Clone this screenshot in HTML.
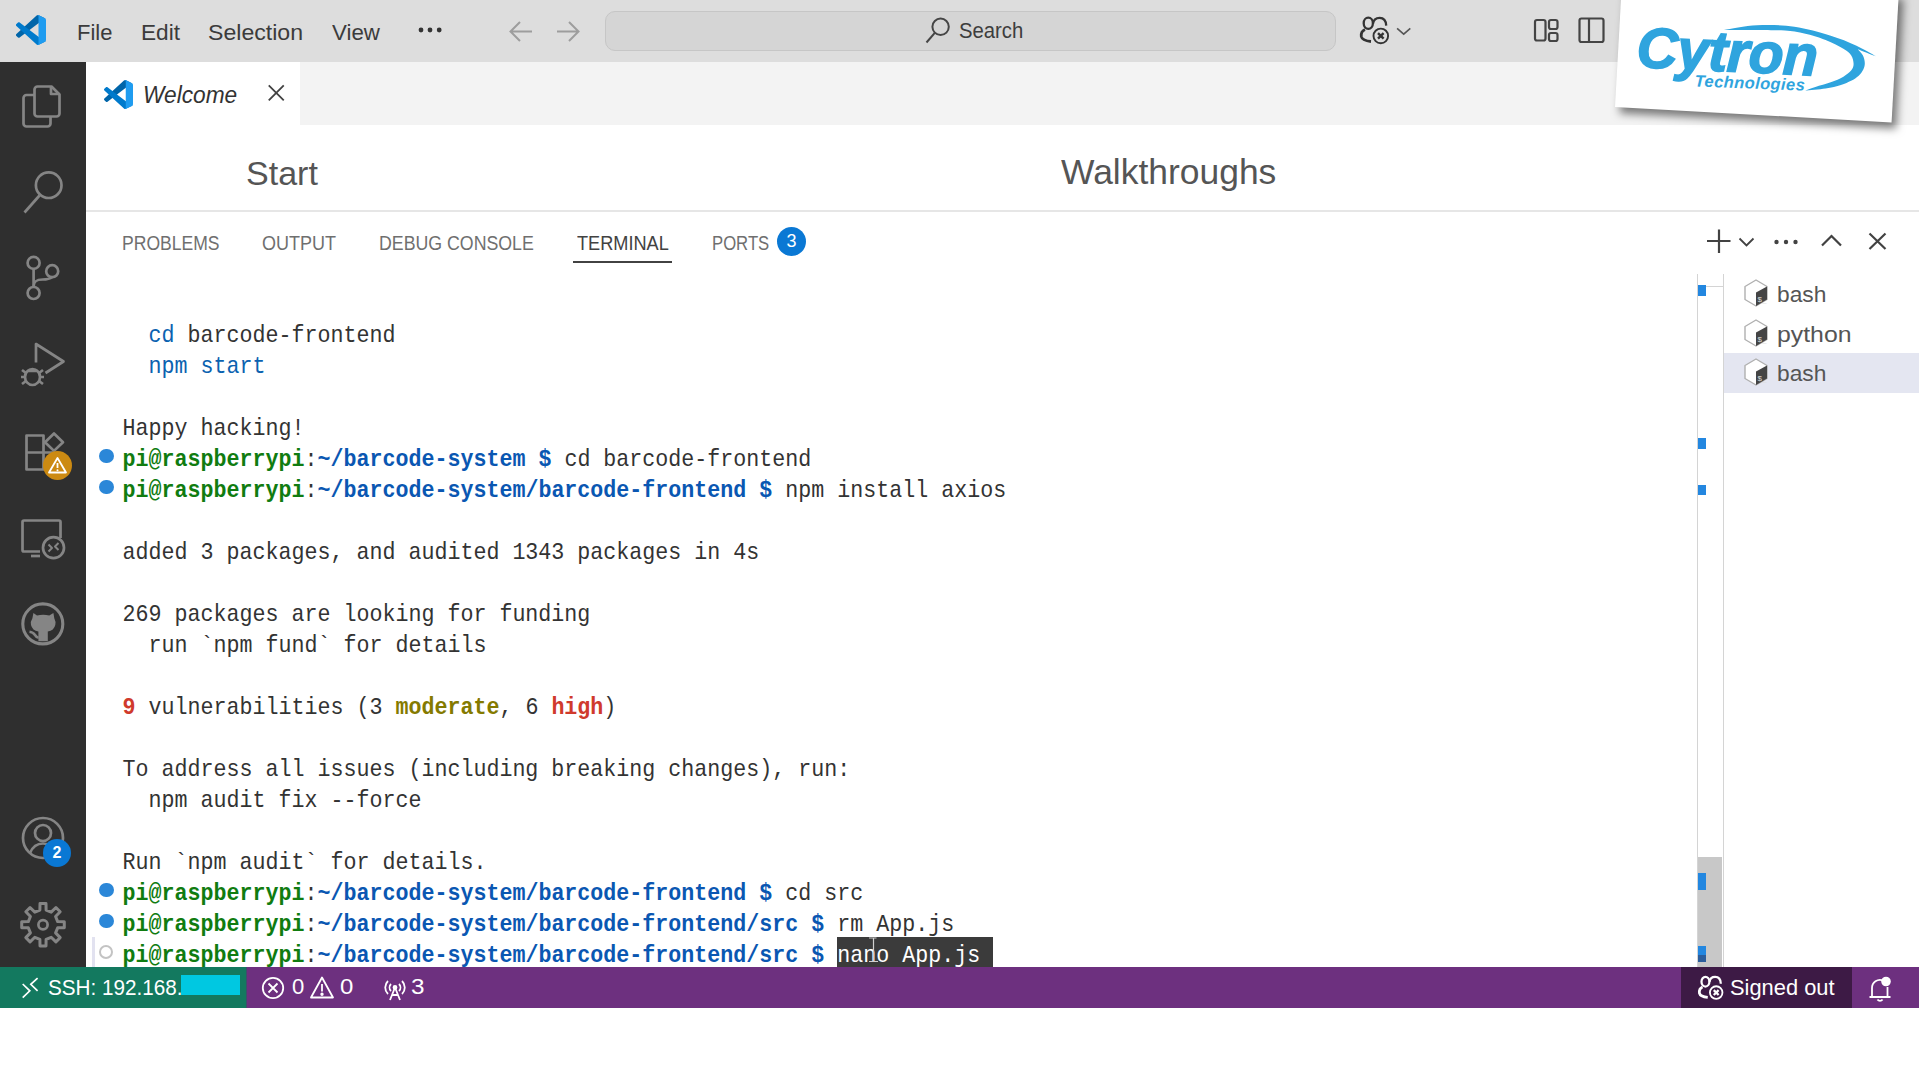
<!DOCTYPE html>
<html><head><meta charset="utf-8">
<style>
*{margin:0;padding:0;box-sizing:border-box}
html,body{width:1919px;height:1079px;overflow:hidden;background:#fff;font-family:"Liberation Sans",sans-serif;position:relative}
.abs{position:absolute}
.tx{position:absolute;height:0;white-space:nowrap;line-height:0}
.tx span{position:absolute;left:0;bottom:0;line-height:1;display:block}
.ln{position:absolute;left:122.5px;transform:scaleY(1.08);transform-origin:0 21.27px;font-family:"Liberation Mono",monospace;font-size:21.667px;line-height:31px;height:31px;white-space:pre;color:#333}
.g{color:#107c10;font-weight:bold}
.b{color:#0a57b2;font-weight:bold}
.c{color:#0b62b0}
.r{color:#d03a2c;font-weight:bold}
.y{color:#847a00;font-weight:bold}
.sel{color:#fff}
</style></head>
<body>
<div class="abs" style="left:0;top:0;width:1919px;height:62px;background:#dddddd"></div>
<svg viewBox="0 0 100 100" width="30" height="30" style="position:absolute;left:16px;top:15px">
<path d="M96.46 10.8L75.86.87C73.47-.28 70.62.2 68.75 2.08L1.3 63.58c-1.81 1.65-1.81 4.51.01 6.15l5.51 5.01c1.49 1.35 3.72 1.45 5.32.24l81.23-61.62c2.72-2.07 6.64-.13 6.64 3.290v-.24c0-2.4-1.38-4.59-3.54-5.63z" fill="#0065A9"/>
<path d="M96.46 89.2L75.86 99.13c-2.39 1.15-5.24.67-7.11-1.21L1.3 36.42c-1.81-1.65-1.81-4.51.01-6.15l5.51-5.01c1.49-1.35 3.72-1.450 5.32-.24l81.23 61.62c2.72 2.07 6.64.13 6.64-3.29v.24c0 2.4-1.38 4.59-3.54 5.63z" fill="#007ACC"/>
<path d="M75.86 99.13c-2.39 1.15-5.24.66-7.11-1.21 2.31 2.31 6.25.67 6.25-2.59V4.67c0-3.26-3.94-4.9-6.25-2.59 1.87-1.87 4.72-2.36 7.11-1.21l20.6 9.91c2.16 1.04 3.54 3.23 3.54 5.63v67.2c0 2.4-1.38 4.59-3.54 5.63z" fill="#1F9CF0"/>
</svg>
<div class="tx" style="left:76.94px;top:44.27px;font-size:21.33px;color:#3b3b3b;font-weight:normal;font-style:normal;transform:scaleX(1.0319);transform-origin:0 0;"><span>File</span></div>
<div class="tx" style="left:140.89px;top:44.27px;font-size:21.33px;color:#3b3b3b;font-weight:normal;font-style:normal;transform:scaleX(1.0604);transform-origin:0 0;"><span>Edit</span></div>
<div class="tx" style="left:208.15px;top:44.27px;font-size:21.33px;color:#3b3b3b;font-weight:normal;font-style:normal;transform:scaleX(1.0828);transform-origin:0 0;"><span>Selection</span></div>
<div class="tx" style="left:332.08px;top:44.27px;font-size:21.33px;color:#3b3b3b;font-weight:normal;font-style:normal;transform:scaleX(1.0448);transform-origin:0 0;"><span>View</span></div>
<svg class="abs" style="left:410px;top:20px" width="40" height="20"><circle cx="11" cy="10" r="2.4" fill="#333"/><circle cx="20" cy="10" r="2.4" fill="#333"/><circle cx="29.2" cy="10" r="2.4" fill="#333"/></svg>
<svg class="abs" style="left:500px;top:15px" width="90" height="32" fill="none" stroke="#9d9d9d" stroke-width="2"><path d="M11 16.5h21M20 7l-9.5 9.5L20 26"/><path d="M57 16.5h21M69 7l9.5 9.5L69 26"/></svg>
<div class="abs" style="left:605px;top:11px;width:731px;height:40px;border:1px solid #c6c6c6;border-radius:10px;background:#d5d5d5"></div>
<svg class="abs" style="left:920px;top:12px" width="30" height="36" fill="none" stroke="#454545" stroke-width="2"><circle cx="20.6" cy="14.8" r="8.2"/><path d="M14.8 20.8L6.5 30.5"/></svg>
<div class="tx" style="left:958.79px;top:42.64px;font-size:22.43px;color:#3d3d3d;font-weight:normal;font-style:normal;transform:scaleX(0.9049);transform-origin:0 0;"><span>Search</span></div>
<svg class="abs" style="left:1355px;top:12px" width="60" height="36" fill="none" stroke="#333" stroke-width="2.3">
<ellipse cx="13.3" cy="11.3" rx="4.6" ry="5.6"/><path d="M18 11.5C18.5 8 21 5.8 24.6 5.8S31 8 31.2 13.6"/><path d="M10 17.5C6.5 19 6 22 6.3 24.5C7 27.5 11 29 16 29.5" stroke-width="2.8"/>
<circle cx="25.8" cy="23.9" r="7.3" stroke-width="1.9"/><path d="M23 21.1l5.6 5.6M28.6 21.1l-5.6 5.6" stroke-width="2.4"/>
<path d="M42.1 16.3l6.6 5.8 6.6-5.8" stroke-width="1.6" stroke="#555"/></svg>
<svg class="abs" style="left:1525px;top:12px" width="90" height="36" fill="none" stroke="#444" stroke-width="2.2">
<rect x="10" y="8" width="10.5" height="20.5" rx="2"/><rect x="24" y="8" width="8.5" height="9" rx="2"/><rect x="24" y="21" width="8.5" height="8" rx="2"/>
<rect x="54.5" y="6.5" width="24" height="23.5" rx="2"/><path d="M64 6.5v23.5"/></svg>
<div class="abs" style="left:1615px;top:-23px;width:277px;height:130px;transform-origin:0 130px;transform:rotate(3.2deg);background:#fff;z-index:10;box-shadow:5px 6px 9px rgba(0,0,0,0.5)"></div>
<svg class="abs" style="left:0;top:0;z-index:11" width="1919" height="140">
<g fill="#2fa4de">
<path d="M1724.00 30.00 L1724.00 30.00 C1729.50 29.22 1745.27 25.85 1757.00 25.30 C1768.73 24.75 1782.23 25.00 1794.40 26.70 C1806.57 28.40 1819.73 32.37 1830.00 35.50 C1840.27 38.63 1848.33 42.03 1856.00 45.50 C1863.67 48.97 1872.67 54.50 1876.00 56.30 L1876.00 56.30 C1872.95 55.12 1860.75 50.38 1857.70 49.20 L1857.70 49.20 C1858.55 50.22 1861.62 53.02 1862.80 55.30 C1863.98 57.58 1864.72 60.52 1864.80 62.90 C1864.88 65.28 1864.32 67.47 1863.30 69.60 C1862.28 71.73 1860.73 73.83 1858.70 75.70 C1856.67 77.57 1854.07 79.27 1851.10 80.80 C1848.13 82.33 1845.15 83.63 1840.90 84.90 C1836.65 86.17 1831.55 87.47 1825.60 88.40 C1819.65 89.33 1808.60 90.15 1805.20 90.50 L1805.20 90.50 C1806.90 89.90 1811.15 88.27 1815.40 86.90 C1819.65 85.53 1826.03 84.00 1830.70 82.30 C1835.37 80.60 1840.00 78.65 1843.40 76.70 C1846.80 74.75 1849.40 72.72 1851.10 70.60 C1852.80 68.48 1853.60 66.55 1853.60 64.00 C1853.60 61.45 1852.80 57.85 1851.10 55.30 C1849.40 52.75 1847.65 51.25 1843.40 48.70 C1839.15 46.15 1832.83 42.68 1825.60 40.00 C1818.37 37.32 1808.27 34.23 1800.00 32.60 C1791.73 30.97 1788.67 30.63 1776.00 30.20 C1763.33 29.77 1732.67 30.03 1724.00 30.00Z"/>
<text x="1636" y="67" transform="rotate(2.7 1636 67)" font-family="Liberation Sans" font-weight="bold" font-style="italic" font-size="57" stroke="#2fa4de" stroke-width="1.6" letter-spacing="-0.5">Cytron</text>
<text x="1694.5" y="86.4" transform="rotate(2.2 1694.5 86.4)" font-family="Liberation Sans" font-weight="bold" font-style="italic" font-size="16.5" letter-spacing="0.4">Technologies</text>
</g></svg>
<div class="abs" style="left:0;top:62px;width:86px;height:905px;background:#2f2f2f"></div>
<svg class="abs" style="left:0;top:62px" width="86" height="905" fill="none" stroke="#858585" stroke-width="2.7" stroke-linejoin="round">
<!-- explorer -->
<path d="M23.5 36v25.5a3 3 0 0 0 3 3h21a3 3 0 0 0 3-3v-7.5"/>
<path d="M23.5 36a3 3 0 0 1 3-3h8"/>
<path d="M37.5 24.5h14l8 8v19a3 3 0 0 1-3 3h-19a3 3 0 0 1-3-3v-24a3 3 0 0 1 3-3z"/>
<path d="M51 24.5v7.5h8.5"/>
<!-- search -->
<circle cx="48.7" cy="123.2" r="12.8"/><path d="M39.5 133.5L24.5 150.5"/>
<!-- source control -->
<circle cx="33.6" cy="200.9" r="6"/><circle cx="52.2" cy="209.2" r="6"/><circle cx="33.6" cy="231" r="6"/>
<path d="M33.6 207v18"/><path d="M33.6 225c0-6 3-7.5 9-7.5s9-2 9.6-2.5"/>
<!-- run debug -->
<path d="M36 300.5V282L63.5 299.5 45.5 311"/>
<ellipse cx="32.5" cy="315" rx="7.5" ry="8"/><path d="M22 308l4 3M22 322l4-3M43 308l-4 3M43 322l-4-3M21 315h4M40 315h4M27 309h11"/>
<!-- extensions -->
<path d="M26.5 373.5h17v34h-17zM26.5 390.5h17M43.5 390.5h9v17h-9"/>
<path d="M54 371.5l9 8.7-9 8.7-9-8.7z"/>
<!-- remote -->
<path d="M40 489.5H24a1.5 1.5 0 0 1-1.5-1.5V460a1.5 1.5 0 0 1 1.5-1.5h35a1.5 1.5 0 0 1 1.5 1.5v16"/><path d="M31 494h9"/>
<circle cx="53.5" cy="485.7" r="10.5"/>
<path d="M48.5 482.5l3.5 3.5-3.5 3.5M58.5 481l-3.5 3.5 3.5 3.5" stroke-width="2"/>
<!-- github -->
<circle cx="42.8" cy="561.9" r="20" stroke-width="3.1"/>
<!-- accounts -->
<circle cx="43" cy="776" r="20"/><circle cx="43" cy="771" r="8"/><path d="M30 791c2.5-6 7-9.5 13-9.5s10.5 3.5 13 9.5"/>
<!-- gear -->
<circle cx="43" cy="862.7" r="4.6"/>
</svg>
<svg class="abs" style="left:0;top:590px" width="86" height="60"><path fill="#858585" d="M33.4 23.1L37 25.6Q43.1 24 49.3 25.6L53.4 23.1L54.3 28.3Q56 31.5 55.3 35Q54 40.5 47.8 41.6V51.3H38.4V41.6Q32.3 40.5 31 35Q30.3 31.5 32.4 28.3Z"/><path d="M29.5 41.7Q33 42 35 45Q36.5 47.5 38.6 47.8" fill="none" stroke="#858585" stroke-width="2.6"/></svg>
<svg class="abs" style="left:0;top:0" width="86" height="1000" fill="none" stroke="#858585" stroke-width="3" stroke-linejoin="round"><path d="M39.88 910.03 L40.01 903.41 L45.99 903.41 L46.12 910.03 L51.17 912.12 L55.94 907.53 L60.17 911.76 L55.58 916.53 L57.67 921.58 L64.29 921.71 L64.29 927.69 L57.67 927.82 L55.58 932.87 L60.17 937.64 L55.94 941.87 L51.17 937.28 L46.12 939.37 L45.99 945.99 L40.01 945.99 L39.88 939.37 L34.83 937.28 L30.06 941.87 L25.83 937.64 L30.42 932.87 L28.33 927.82 L21.71 927.69 L21.71 921.71 L28.33 921.58 L30.42 916.53 L25.83 911.76 L30.06 907.53 L34.83 912.12Z"/></svg>
<div class="abs" style="left:43px;top:451px;width:29px;height:29px;border-radius:50%;background:#cc8a12"></div>
<svg class="abs" style="left:43px;top:451px" width="29" height="29"><path d="M14.5 7L23 21.5H6z" fill="none" stroke="#fff" stroke-width="1.8" stroke-linejoin="round"/><path d="M14.5 12v5" stroke="#fff" stroke-width="1.8"/><circle cx="14.5" cy="19.3" r="1" fill="#fff"/></svg>
<div class="abs" style="left:43px;top:839px;width:28px;height:28px;border-radius:50%;background:#0a78d4;color:#fff;font-weight:bold;font-size:16px;line-height:28px;text-align:center">2</div>
<div class="abs" style="left:86px;top:62px;width:1833px;height:63px;background:#f3f3f3"></div>
<div class="abs" style="left:86px;top:62px;width:214px;height:63px;background:#fff"></div>
<svg viewBox="0 0 100 100" width="29" height="29" style="position:absolute;left:104px;top:80px">
<path d="M96.46 10.8L75.86.87C73.47-.28 70.62.2 68.75 2.08L1.3 63.58c-1.81 1.65-1.81 4.51.01 6.15l5.51 5.01c1.49 1.35 3.72 1.45 5.32.24l81.23-61.62c2.72-2.07 6.64-.13 6.64 3.290v-.24c0-2.4-1.38-4.59-3.54-5.63z" fill="#0065A9"/>
<path d="M96.46 89.2L75.86 99.13c-2.39 1.15-5.24.67-7.11-1.21L1.3 36.42c-1.81-1.65-1.81-4.51.01-6.15l5.51-5.01c1.49-1.35 3.72-1.450 5.32-.24l81.23 61.62c2.72 2.07 6.64.13 6.64-3.29v.24c0 2.4-1.38 4.59-3.54 5.63z" fill="#007ACC"/>
<path d="M75.86 99.13c-2.39 1.15-5.24.66-7.11-1.21 2.31 2.31 6.25.67 6.25-2.59V4.67c0-3.26-3.94-4.9-6.25-2.59 1.87-1.87 4.72-2.36 7.11-1.21l20.6 9.91c2.16 1.04 3.54 3.23 3.54 5.63v67.2c0 2.4-1.38 4.59-3.54 5.63z" fill="#1F9CF0"/>
</svg>
<div class="tx" style="left:142.86px;top:106.85px;font-size:23.14px;color:#333;font-weight:normal;font-style:italic;transform:scaleX(0.9814);transform-origin:0 0;"><span>Welcome</span></div>
<svg class="abs" style="left:262px;top:79px" width="28" height="28" stroke="#424242" stroke-width="2.2"><path d="M6.75 6.4l15 15M21.75 6.4l-15 15" stroke-width="1.8"/></svg>
<div class="abs" style="left:86px;top:125px;width:1833px;height:86px;background:#fff"></div>
<div class="tx" style="left:245.50px;top:190.32px;font-size:34.00px;color:#555;font-weight:normal;font-style:normal;transform:scaleX(1.0014);transform-origin:0 0;"><span>Start</span></div>
<div class="tx" style="left:1061.00px;top:190.90px;font-size:35.86px;color:#555;font-weight:normal;font-style:normal;transform:scaleX(0.9881);transform-origin:0 0;"><span>Walkthroughs</span></div>
<div class="abs" style="left:86px;top:210px;width:1833px;height:2px;background:#e6e6e6"></div>
<div class="tx" style="left:121.70px;top:252.87px;font-size:20.00px;color:#6f6f6f;font-weight:normal;font-style:normal;transform:scaleX(0.8775);transform-origin:0 0;"><span>PROBLEMS</span></div>
<div class="tx" style="left:261.80px;top:252.87px;font-size:20.00px;color:#6f6f6f;font-weight:normal;font-style:normal;transform:scaleX(0.8998);transform-origin:0 0;"><span>OUTPUT</span></div>
<div class="tx" style="left:378.88px;top:252.87px;font-size:20.00px;color:#6f6f6f;font-weight:normal;font-style:normal;transform:scaleX(0.8873);transform-origin:0 0;"><span>DEBUG CONSOLE</span></div>
<div class="tx" style="left:577.24px;top:252.87px;font-size:20.00px;color:#424242;font-weight:normal;font-style:normal;transform:scaleX(0.9080);transform-origin:0 0;"><span>TERMINAL</span></div>
<div class="tx" style="left:712.06px;top:252.87px;font-size:20.00px;color:#6f6f6f;font-weight:normal;font-style:normal;transform:scaleX(0.8348);transform-origin:0 0;"><span>PORTS</span></div>
<div class="abs" style="left:573px;top:261px;width:99px;height:2px;background:#424242"></div>
<div class="abs" style="left:777px;top:227px;width:29px;height:29px;border-radius:50%;background:#0a78d4;color:#fff;font-size:18px;line-height:29px;text-align:center">3</div>
<svg class="abs" style="left:1700px;top:222px" width="200" height="40" fill="none" stroke="#424242" stroke-width="2.2">
<path d="M19 7.5v23.5M7 19h23.5"/><path d="M39.5 16.5l7 7 7-7" stroke-width="1.8"/>
<path d="M122 23.5l9.5-9.5 9.5 9.5"/><path d="M169.5 11.5l16 15.5M185.5 11.5l-16 15.5"/></svg>
<svg class="abs" style="left:1770px;top:232px" width="32" height="20"><circle cx="6.5" cy="10" r="2.2" fill="#424242"/><circle cx="16" cy="10" r="2.2" fill="#424242"/><circle cx="25.5" cy="10" r="2.2" fill="#424242"/></svg>
<div class="abs" style="left:837px;top:936.5px;width:156px;height:30.5px;background:#3b3b3b"></div>
<div class="ln" style="top:320.5px">  <span class="c">cd</span> barcode-frontend</div>
<div class="ln" style="top:351.5px">  <span class="c">npm start</span></div>
<div class="ln" style="top:382.5px"></div>
<div class="ln" style="top:413.5px">Happy hacking!</div>
<div class="ln" style="top:444.5px"><span class="g">pi@raspberrypi</span>:<span class="b">~/barcode-system $</span> cd barcode-frontend</div>
<div class="abs" style="left:99px;top:448.6px;width:14.8px;height:14.8px;border-radius:50%;background:#2b87d8"></div>
<div class="ln" style="top:475.5px"><span class="g">pi@raspberrypi</span>:<span class="b">~/barcode-system/barcode-frontend $</span> npm install axios</div>
<div class="abs" style="left:99px;top:479.6px;width:14.8px;height:14.8px;border-radius:50%;background:#2b87d8"></div>
<div class="ln" style="top:506.5px"></div>
<div class="ln" style="top:537.5px">added 3 packages, and audited 1343 packages in 4s</div>
<div class="ln" style="top:568.5px"></div>
<div class="ln" style="top:599.5px">269 packages are looking for funding</div>
<div class="ln" style="top:630.5px">  run `npm fund` for details</div>
<div class="ln" style="top:661.5px"></div>
<div class="ln" style="top:692.5px"><span class="r">9</span> vulnerabilities (3 <span class="y">moderate</span>, 6 <span class="r">high</span>)</div>
<div class="ln" style="top:723.5px"></div>
<div class="ln" style="top:754.5px">To address all issues (including breaking changes), run:</div>
<div class="ln" style="top:785.5px">  npm audit fix --force</div>
<div class="ln" style="top:816.5px"></div>
<div class="ln" style="top:847.5px">Run `npm audit` for details.</div>
<div class="ln" style="top:878.5px"><span class="g">pi@raspberrypi</span>:<span class="b">~/barcode-system/barcode-frontend $</span> cd src</div>
<div class="abs" style="left:99px;top:882.6px;width:14.8px;height:14.8px;border-radius:50%;background:#2b87d8"></div>
<div class="ln" style="top:909.5px"><span class="g">pi@raspberrypi</span>:<span class="b">~/barcode-system/barcode-frontend/src $</span> rm App.js</div>
<div class="abs" style="left:99px;top:913.6px;width:14.8px;height:14.8px;border-radius:50%;background:#2b87d8"></div>
<div class="ln" style="top:940.5px"><span class="g">pi@raspberrypi</span>:<span class="b">~/barcode-system/barcode-frontend/src $</span> <span class="sel">nano App.js </span></div>
<div class="abs" style="left:99px;top:944.8px;width:14.4px;height:14.4px;border-radius:50%;border:2px solid #c3c3c3"></div>
<svg class="abs" style="left:866px;top:936px" width="16" height="28" stroke="#d0d0d0" stroke-width="1.2" fill="none"><path d="M3 2h4.5M10.5 2H6M7.5 2v23M3 25.5h4.5M12 25.5H7.5"/></svg>
<div class="abs" style="left:92px;top:937px;width:3px;height:30px;background:#e2e2f0"></div>
<div class="abs" style="left:1697px;top:274px;width:1px;height:693px;background:#d4d4d4"></div>
<div class="abs" style="left:1723px;top:274px;width:1px;height:693px;background:#d4d4d4"></div>
<div class="abs" style="left:1698px;top:857px;width:24px;height:110px;background:#c8c8c8"></div>
<div class="abs" style="left:1698px;top:285px;width:8px;height:11px;background:#2387e0"></div>
<div class="abs" style="left:1698px;top:438px;width:8px;height:11px;background:#2387e0"></div>
<div class="abs" style="left:1698px;top:484.5px;width:8px;height:10.5px;background:#2387e0"></div>
<div class="abs" style="left:1698px;top:873.3px;width:8px;height:16.5px;background:#2387e0"></div>
<div class="abs" style="left:1698px;top:945.8px;width:8px;height:9.5px;background:#2387e0"></div>
<div class="abs" style="left:1698px;top:955.3px;width:8px;height:7px;background:#2b5d9c"></div>
<div class="abs" style="left:1706px;top:286px;width:17px;height:1px;background:#d4d4d4"></div>
<div class="abs" style="left:1724px;top:353px;width:195px;height:40px;background:#e4e6f1"></div>
<svg class="abs" style="left:1740px;top:277px" width="32" height="32"><path d="M16 3L27 9.5V22.5L16 29L5 22.5V9.5Z" fill="#fff" stroke="#b0b0b0" stroke-width="1.4" stroke-linejoin="round"/><path d="M16 15.5L27 9.5V22.5L16 29Z" fill="#444"/><text x="17.5" y="25" font-size="8" font-family="Liberation Sans" fill="#ddd">$_</text></svg>
<div class="tx" style="left:1776.94px;top:306.36px;font-size:21.92px;color:#555;font-weight:normal;font-style:normal;transform:scaleX(1.0377);transform-origin:0 0;"><span>bash</span></div>
<svg class="abs" style="left:1740px;top:317px" width="32" height="32"><path d="M16 3L27 9.5V22.5L16 29L5 22.5V9.5Z" fill="#fff" stroke="#b0b0b0" stroke-width="1.4" stroke-linejoin="round"/><path d="M16 15.5L27 9.5V22.5L16 29Z" fill="#444"/><text x="17.5" y="25" font-size="8" font-family="Liberation Sans" fill="#ddd">$_</text></svg>
<div class="tx" style="left:1776.81px;top:346.36px;font-size:21.92px;color:#555;font-weight:normal;font-style:normal;transform:scaleX(1.1327);transform-origin:0 0;"><span>python</span></div>
<svg class="abs" style="left:1740px;top:356px" width="32" height="32"><path d="M16 3L27 9.5V22.5L16 29L5 22.5V9.5Z" fill="#fff" stroke="#b0b0b0" stroke-width="1.4" stroke-linejoin="round"/><path d="M16 15.5L27 9.5V22.5L16 29Z" fill="#444"/><text x="17.5" y="25" font-size="8" font-family="Liberation Sans" fill="#ddd">$_</text></svg>
<div class="tx" style="left:1776.94px;top:385.36px;font-size:21.92px;color:#555;font-weight:normal;font-style:normal;transform:scaleX(1.0377);transform-origin:0 0;"><span>bash</span></div>
<div class="abs" style="left:0;top:967px;width:1919px;height:41px;background:#6d307f"></div>
<div class="abs" style="left:0;top:967px;width:247px;height:41px;background:#13795f"></div>
<div class="abs" style="left:246px;top:967px;width:1px;height:41px;background:#3d4f6c"></div>
<svg class="abs" style="left:18px;top:977px" width="24" height="24" fill="none" stroke="#fff" stroke-width="2"><path d="M4.7 7L11.8 13.8L4.7 20.6M19.6 1.1L12.8 7.3L19.6 13.8" stroke-width="1.7"/></svg>
<div class="tx" style="left:48.27px;top:999.01px;font-size:22.86px;color:#fff;font-weight:normal;font-style:normal;transform:scaleX(0.9045);transform-origin:0 0;"><span>SSH: 192.168.</span></div>
<div class="abs" style="left:181px;top:975px;width:59px;height:20px;background:#00c8e1"></div>
<svg class="abs" style="left:258px;top:976px" width="180" height="26" fill="none" stroke="#fff" stroke-width="1.8"><circle cx="15" cy="12" r="10.2"/><path d="M10.5 7.5l9 9M19.5 7.5l-9 9"/><path d="M64 1.5l11 20H53z" stroke-linejoin="round"/><path d="M64 8v7.5"/><circle cx="64" cy="18.2" r="0.8"/></svg>
<div class="tx" style="left:291.52px;top:998.96px;font-size:22.54px;color:#fff;font-weight:normal;font-style:normal;transform:scaleX(0.9799);transform-origin:0 0;"><span>0</span></div>
<div class="tx" style="left:339.54px;top:998.96px;font-size:22.54px;color:#fff;font-weight:normal;font-style:normal;transform:scaleX(1.0632);transform-origin:0 0;"><span>0</span></div>
<svg class="abs" style="left:380px;top:976px" width="30" height="26" fill="none" stroke="#fff" stroke-width="1.8"><path d="M8 5a9 9 0 0 0 0 13M22 5a9 9 0 0 1 0 13M11 8a5 5 0 0 0 0 7M19 8a5 5 0 0 1 0 7M15 11.5L10 24M15 11.5L20 24M12 19h6"/><circle cx="15" cy="11.5" r="1.5" fill="#fff"/></svg>
<div class="tx" style="left:410.63px;top:998.96px;font-size:22.54px;color:#fff;font-weight:normal;font-style:normal;transform:scaleX(1.0763);transform-origin:0 0;"><span>3</span></div>
<div class="abs" style="left:1681px;top:967px;width:171px;height:41px;background:#3d1a45"></div>
<svg class="abs" style="left:1694px;top:972px" width="36" height="32" fill="none" stroke="#fff" stroke-width="2.6"><g transform="scale(0.86)">
<ellipse cx="13.3" cy="11.3" rx="4.6" ry="5.6"/><path d="M18 11.5C18.5 8 21 5.8 24.6 5.8S31 8 31.2 13.6"/><path d="M10 17.5C6.5 19 6 22 6.3 24.5C7 27.5 11 29 16 29.5" stroke-width="3.2"/>
<circle cx="25.8" cy="23.9" r="7.3" stroke-width="2.1"/><path d="M23 21.1l5.6 5.6M28.6 21.1l-5.6 5.6" stroke-width="2.6"/></g></svg>
<div class="tx" style="left:1729.81px;top:999.21px;font-size:22.19px;color:#fff;font-weight:normal;font-style:normal;transform:scaleX(0.9852);transform-origin:0 0;"><span>Signed out</span></div>
<svg class="abs" style="left:1864px;top:974px" width="32" height="30" fill="none" stroke="#fff" stroke-width="1.8"><path d="M8 22V14a8 8 0 0 1 11-7.5M23.5 13v9M5.5 23h21M13.5 25.5a3 3 0 0 0 5 0"/><circle cx="22" cy="7.5" r="4.8" fill="#fff" stroke="none"/></svg>
</body></html>
